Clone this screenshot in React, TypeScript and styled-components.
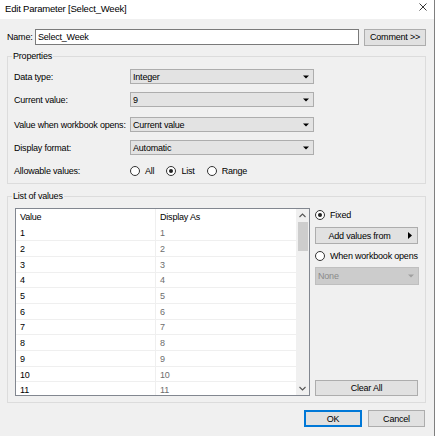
import React from "react";
import styled, { createGlobalStyle } from "styled-components";

const GlobalStyle = createGlobalStyle`
  html, body { margin: 0; padding: 0; background: #ffffff; }
  body {
    font-family: "Liberation Sans", Arial, sans-serif;
    font-size: 9px;
    letter-spacing: -0.2px;
    color: #000;
  }
  * { box-sizing: border-box; }
`;

const Screen = styled.div`
  display: flex;
  width: 438px;
  height: 436px;
  background: #ffffff;
  overflow: hidden;
`;

const Window = styled.div`
  width: 435px;
  border-right: 1px solid #7f7f7f;
  display: flex;
  flex-direction: column;
  background: #f0f0f0;
`;

const TitleBar = styled.div`
  height: 19px;
  flex: none;
  background: #ffffff;
  display: flex;
  justify-content: space-between;
  padding: 0 7px 0 5px;
`;

const TitleText = styled.div`
  font-size: 9.5px;
  line-height: 18px;
`;

const CloseIcon = styled.svg`
  margin-top: 3px;
`;

const Body = styled.div`
  flex: 1;
  display: flex;
  flex-direction: column;
  padding: 10px 8px 0 7px;
`;

const NameRow = styled.div`
  display: flex;
  align-items: center;
  height: 16px;
`;

const NameLabel = styled.div`
  width: 28px;
`;

const TextBox = styled.div`
  width: 324px;
  height: 16px;
  margin-right: 5px;
  background: #ffffff;
  border: 1px solid #7a7a7a;
  padding-left: 2px;
  line-height: 14px;
`;

const Button = styled.div<{ $w: number; $primary?: boolean; $h?: number }>`
  width: ${(p) => p.$w}px;
  height: ${(p) => p.$h ?? 16}px;
  flex: none;
  display: flex;
  align-items: center;
  justify-content: center;
  background: #e1e1e1;
  border: 1px solid ${(p) => (p.$primary ? "#0078d7" : "#adadad")};
  box-shadow: ${(p) => (p.$primary ? "inset 0 0 0 1px #0078d7" : "none")};
`;

const ButtonLabel = styled.span`
  flex: 1;
  text-align: center;
`;

const ArrowSlot = styled.span`
  width: 14px;
  display: flex;
  justify-content: center;
  align-items: center;
`;

const Group = styled.fieldset<{ $top: number; $pt: number; $pb: number }>`
  margin: ${(p) => p.$top}px 0 0 0;
  border: 1px solid #dcdcdc;
  padding: ${(p) => p.$pt}px 6px ${(p) => p.$pb}px 6px;
  min-width: 0;
`;

const Legend = styled.legend`
  padding: 0 1px;
  margin-left: -2px;
  line-height: 12px;
  font-size: 9px;
`;

const PropRow = styled.div<{ $mt: number }>`
  display: grid;
  grid-template-columns: 116px 184px;
  align-items: center;
  height: 15px;
  margin-top: ${(p) => p.$mt}px;
`;

const Combo = styled.div<{ $disabled?: boolean; $h?: number }>`
  height: ${(p) => p.$h ?? 15}px;
  display: flex;
  align-items: center;
  justify-content: space-between;
  padding: 0 4px 0 2px;
  background: ${(p) => (p.$disabled ? "#cccccc" : "#e3e3e3")};
  border: 1px solid ${(p) => (p.$disabled ? "#bfbfbf" : "#adadad")};
  color: ${(p) => (p.$disabled ? "#8a8a8a" : "#000")};
`;

const RadioGroup = styled.div`
  display: flex;
  align-items: center;
  gap: 12px;
`;

const RadioOption = styled.div<{ $mt?: number }>`
  display: flex;
  align-items: center;
  gap: 5px;
  height: 12px;
  margin-top: ${(p) => p.$mt ?? 0}px;
`;

const RadioCircle = styled.span<{ $on?: boolean }>`
  width: 10px;
  height: 10px;
  flex: none;
  border-radius: 50%;
  border: 1px solid #333;
  background: #fff;
  display: flex;
  align-items: center;
  justify-content: center;
  &::after {
    content: "";
    width: 4px;
    height: 4px;
    border-radius: 50%;
    background: ${(p) => (p.$on ? "#222" : "transparent")};
  }
`;

const ListArea = styled.div`
  display: flex;
  gap: 5px;
  margin-left: 1px;
`;

const Table = styled.div`
  width: 295px;
  height: 188px;
  border: 1px solid #828790;
  background: #ffffff;
  display: flex;
  overflow: hidden;
`;

const Grid = styled.div`
  width: 280px;
  display: flex;
  flex-direction: column;
  overflow: hidden;
`;

const GridRow = styled.div<{ $header?: boolean }>`
  display: grid;
  grid-template-columns: 139px 1px 1fr;
  height: ${(p) => (p.$header ? 16.5 : 15.7)}px;
  flex: none;
  box-shadow: ${(p) => (p.$header ? "none" : "inset 0 -1px 0 #efefef")};
`;

const Cell = styled.div<{ $muted?: boolean }>`
  padding-left: 4px;
  display: flex;
  align-items: center;
  color: ${(p) => (p.$muted ? "#6d6d6d" : "#000")};
`;

const Divider = styled.div`
  background: #efefef;
`;

const ScrollBar = styled.div`
  width: 13px;
  background: #f0f0f0;
  display: flex;
  flex-direction: column;
  align-items: center;
`;

const ScrollArrow = styled.div`
  height: 13px;
  width: 13px;
  display: flex;
  align-items: center;
  justify-content: center;
`;

const Thumb = styled.div`
  width: 10px;
  height: 29px;
  background: #cdcdcd;
`;

const ScrollTrack = styled.div`
  flex: 1;
`;

const SidePanel = styled.div`
  width: 104px;
  height: 188px;
  display: flex;
  flex-direction: column;
`;

const Spacer = styled.div`
  flex: 1;
`;

const Footer = styled.div`
  display: flex;
  justify-content: flex-end;
  gap: 6px;
  margin-top: 7px;
  padding-right: 1px;
`;

const DownTri = ({ color = "#000" }: { color?: string }) => (
  <svg width="6" height="4" viewBox="0 0 6 4">
    <polygon points="0,0.5 6,0.5 3,3.5" fill={color} />
  </svg>
);

const rows = Array.from({ length: 11 }, (_, i) => String(i + 1));

export default function App() {
  return (
    <>
      <GlobalStyle />
      <Screen>
        <Window>
          <TitleBar>
            <TitleText>Edit Parameter [Select_Week]</TitleText>
            <CloseIcon width="8" height="8" viewBox="0 0 8 8">
              <path d="M0.5 0.5 L7.5 7.5 M7.5 0.5 L0.5 7.5" stroke="#222" strokeWidth="0.9" />
            </CloseIcon>
          </TitleBar>
          <Body>
            <NameRow>
              <NameLabel>Name:</NameLabel>
              <TextBox>Select_Week</TextBox>
              <Button $w={62} $h={17}>Comment &gt;&gt;</Button>
            </NameRow>

            <Group $top={5} $pt={7} $pb={5}>
              <Legend>Properties</Legend>
              <PropRow $mt={0}>
                <span>Data type:</span>
                <Combo>
                  <span>Integer</span>
                  <DownTri />
                </Combo>
              </PropRow>
              <PropRow $mt={8}>
                <span>Current value:</span>
                <Combo>
                  <span>9</span>
                  <DownTri />
                </Combo>
              </PropRow>
              <PropRow $mt={10}>
                <span>Value when workbook opens:</span>
                <Combo>
                  <span>Current value</span>
                  <DownTri />
                </Combo>
              </PropRow>
              <PropRow $mt={8}>
                <span>Display format:</span>
                <Combo>
                  <span>Automatic</span>
                  <DownTri />
                </Combo>
              </PropRow>
              <PropRow $mt={8}>
                <span>Allowable values:</span>
                <RadioGroup>
                  <RadioOption>
                    <RadioCircle />
                    <span>All</span>
                  </RadioOption>
                  <RadioOption>
                    <RadioCircle $on />
                    <span>List</span>
                  </RadioOption>
                  <RadioOption>
                    <RadioCircle />
                    <span>Range</span>
                  </RadioOption>
                </RadioGroup>
              </PropRow>
            </Group>

            <Group $top={6} $pt={6} $pb={6}>
              <Legend>List of values</Legend>
              <ListArea>
                <Table>
                  <Grid>
                    <GridRow $header>
                      <Cell>Value</Cell>
                      <Divider />
                      <Cell>Display As</Cell>
                    </GridRow>
                    {rows.map((r) => (
                      <GridRow key={r}>
                        <Cell>{r}</Cell>
                        <Divider />
                        <Cell $muted>{r}</Cell>
                      </GridRow>
                    ))}
                  </Grid>
                  <ScrollBar>
                    <ScrollArrow>
                      <svg width="7" height="5" viewBox="0 0 7 5">
                        <path d="M0.5 4 L3.5 1 L6.5 4" stroke="#555" strokeWidth="1.1" fill="none" />
                      </svg>
                    </ScrollArrow>
                    <Thumb />
                    <ScrollTrack />
                    <ScrollArrow>
                      <svg width="7" height="5" viewBox="0 0 7 5">
                        <path d="M0.5 1 L3.5 4 L6.5 1" stroke="#555" strokeWidth="1.1" fill="none" />
                      </svg>
                    </ScrollArrow>
                  </ScrollBar>
                </Table>
                <SidePanel>
                  <RadioOption $mt={1}>
                    <RadioCircle $on />
                    <span>Fixed</span>
                  </RadioOption>
                  <Button $w={103} $h={17} style={{ marginTop: 6 }}>
                    <ButtonLabel>Add values from</ButtonLabel>
                    <ArrowSlot>
                      <svg width="4" height="7" viewBox="0 0 4 7">
                        <polygon points="0,0 4,3.5 0,7" fill="#000" />
                      </svg>
                    </ArrowSlot>
                  </Button>
                  <RadioOption $mt={6}>
                    <RadioCircle />
                    <span>When workbook opens</span>
                  </RadioOption>
                  <Combo $disabled $h={18} style={{ marginTop: 5, width: 104 }}>
                    <span>None</span>
                    <DownTri color="#a0a0a0" />
                  </Combo>
                  <Spacer />
                  <Button $w={103} $h={16}>Clear All</Button>
                </SidePanel>
              </ListArea>
            </Group>

            <Footer>
              <Button $w={58} $h={17} $primary>OK</Button>
              <Button $w={57} $h={17}>Cancel</Button>
            </Footer>
          </Body>
        </Window>
      </Screen>
    </>
  );
}
